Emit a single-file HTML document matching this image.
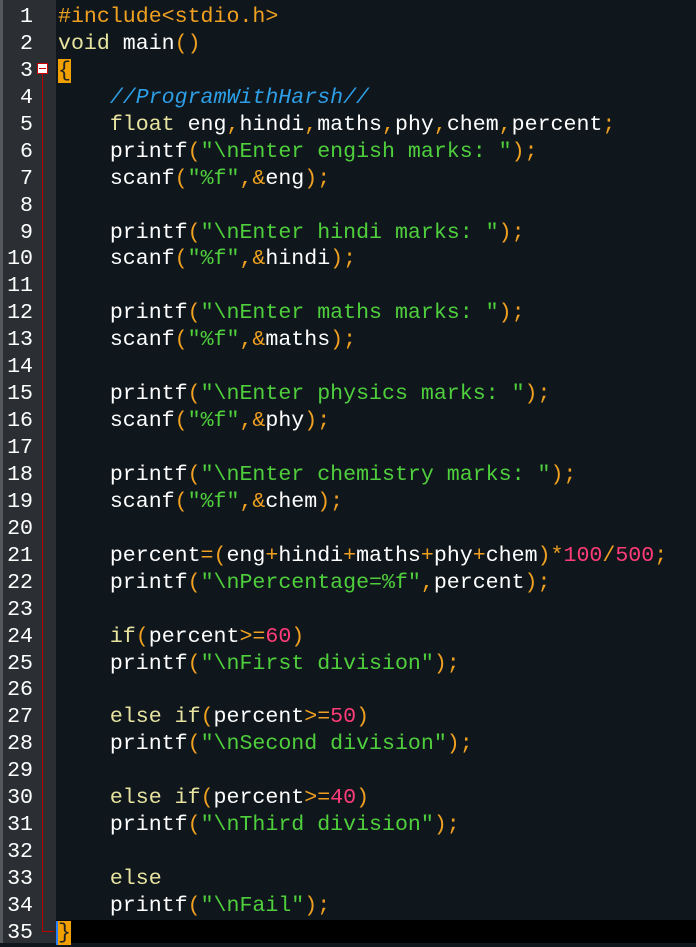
<!DOCTYPE html>
<html><head><style>
html,body{margin:0;padding:0;}
body{width:696px;height:943px;background:#0f171d;position:relative;overflow:hidden;font-family:"Liberation Mono",monospace;font-size:21.6px;}
.g{position:absolute;left:0;top:0;width:56px;height:943px;background:#2b2f33;}
.g:before{content:"";position:absolute;left:0;top:0;width:3px;height:943px;background:#55595c;}
.last{position:absolute;left:56px;top:920px;width:640px;height:23px;background:#000;}
.ln{position:absolute;left:0;width:33px;text-align:right;color:#fff;}
.code{position:absolute;left:58px;color:#fff;}
.l{height:26.94px;line-height:26.94px;white-space:pre;}
.k{color:#e8e4a0}.o{color:#f0a020}.s{color:#4fcf3c}.n{color:#ff3c78}.c{color:#2e9fe6;font-style:italic}
.b{background:#f0a000;color:#222;}
.fold{position:absolute;left:37px;top:63px;width:9px;height:9px;border:1px solid #c00;background:#fff;}
.fold:after{content:"";position:absolute;left:1px;top:4px;width:7px;height:1px;background:#c00;}
.vl{position:absolute;left:42px;top:74px;width:1px;height:858px;background:#b00;}
.hl{position:absolute;left:42px;top:931px;width:12px;height:1px;background:#b00;}
</style></head><body>
<div class="g"></div>
<div class="last"></div>
<div class="fold"></div><div class="vl"></div><div class="hl"></div>
<div class="ln" style="top:4px"><div class="l">1</div><div class="l">2</div><div class="l">3</div><div class="l">4</div><div class="l">5</div><div class="l">6</div><div class="l">7</div><div class="l">8</div><div class="l">9</div><div class="l">10</div><div class="l">11</div><div class="l">12</div><div class="l">13</div><div class="l">14</div><div class="l">15</div><div class="l">16</div><div class="l">17</div><div class="l">18</div><div class="l">19</div><div class="l">20</div><div class="l">21</div><div class="l">22</div><div class="l">23</div><div class="l">24</div><div class="l">25</div><div class="l">26</div><div class="l">27</div><div class="l">28</div><div class="l">29</div><div class="l">30</div><div class="l">31</div><div class="l">32</div><div class="l">33</div><div class="l">34</div><div class="l">35</div></div>
<div class="code" style="top:4px">
<div class="l"><span class="o">#include&lt;stdio.h&gt;</span></div>
<div class="l"><span class="k">void</span> main<span class="o">()</span></div>
<div class="l"><span class="b">{</span></div>
<div class="l">    <span class="c">//ProgramWithHarsh//</span></div>
<div class="l">    <span class="k">float</span> eng<span class="o">,</span>hindi<span class="o">,</span>maths<span class="o">,</span>phy<span class="o">,</span>chem<span class="o">,</span>percent<span class="o">;</span></div>
<div class="l">    printf<span class="o">(</span><span class="s">"\nEnter engish marks: "</span><span class="o">);</span></div>
<div class="l">    scanf<span class="o">(</span><span class="s">"%f"</span><span class="o">,&amp;</span>eng<span class="o">);</span></div>
<div class="l"> </div>
<div class="l">    printf<span class="o">(</span><span class="s">"\nEnter hindi marks: "</span><span class="o">);</span></div>
<div class="l">    scanf<span class="o">(</span><span class="s">"%f"</span><span class="o">,&amp;</span>hindi<span class="o">);</span></div>
<div class="l"> </div>
<div class="l">    printf<span class="o">(</span><span class="s">"\nEnter maths marks: "</span><span class="o">);</span></div>
<div class="l">    scanf<span class="o">(</span><span class="s">"%f"</span><span class="o">,&amp;</span>maths<span class="o">);</span></div>
<div class="l"> </div>
<div class="l">    printf<span class="o">(</span><span class="s">"\nEnter physics marks: "</span><span class="o">);</span></div>
<div class="l">    scanf<span class="o">(</span><span class="s">"%f"</span><span class="o">,&amp;</span>phy<span class="o">);</span></div>
<div class="l"> </div>
<div class="l">    printf<span class="o">(</span><span class="s">"\nEnter chemistry marks: "</span><span class="o">);</span></div>
<div class="l">    scanf<span class="o">(</span><span class="s">"%f"</span><span class="o">,&amp;</span>chem<span class="o">);</span></div>
<div class="l"> </div>
<div class="l">    percent<span class="o">=(</span>eng<span class="o">+</span>hindi<span class="o">+</span>maths<span class="o">+</span>phy<span class="o">+</span>chem<span class="o">)*</span><span class="n">100</span><span class="o">/</span><span class="n">500</span><span class="o">;</span></div>
<div class="l">    printf<span class="o">(</span><span class="s">"\nPercentage=%f"</span><span class="o">,</span>percent<span class="o">);</span></div>
<div class="l"> </div>
<div class="l">    <span class="k">if</span><span class="o">(</span>percent<span class="o">&gt;=</span><span class="n">60</span><span class="o">)</span></div>
<div class="l">    printf<span class="o">(</span><span class="s">"\nFirst division"</span><span class="o">);</span></div>
<div class="l"> </div>
<div class="l">    <span class="k">else if</span><span class="o">(</span>percent<span class="o">&gt;=</span><span class="n">50</span><span class="o">)</span></div>
<div class="l">    printf<span class="o">(</span><span class="s">"\nSecond division"</span><span class="o">);</span></div>
<div class="l"> </div>
<div class="l">    <span class="k">else if</span><span class="o">(</span>percent<span class="o">&gt;=</span><span class="n">40</span><span class="o">)</span></div>
<div class="l">    printf<span class="o">(</span><span class="s">"\nThird division"</span><span class="o">);</span></div>
<div class="l"> </div>
<div class="l">    <span class="k">else</span></div>
<div class="l">    printf<span class="o">(</span><span class="s">"\nFail"</span><span class="o">);</span></div>
<div class="l"><span class="b" style="border-left:2px solid #2a7fff;margin-left:-2px">}</span></div>
</div>
</body></html>
